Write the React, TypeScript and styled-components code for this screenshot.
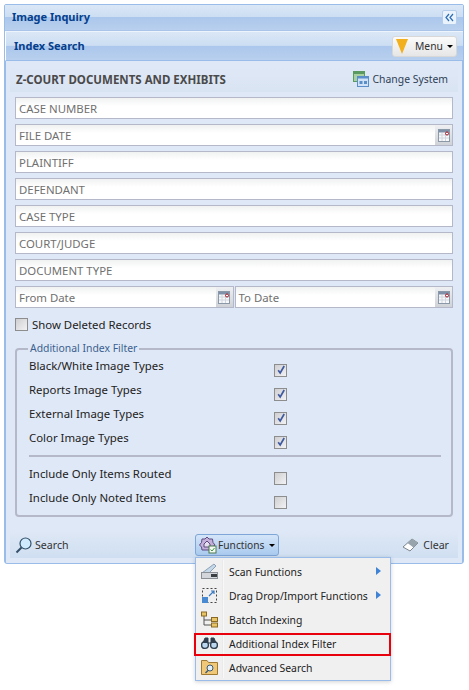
import React from "react";
import styled, { createGlobalStyle } from "styled-components";

const Global = createGlobalStyle`
  html, body { margin: 0; padding: 0; background: #fff; }
  body { font-family: "Noto Sans", "Open Sans", sans-serif; font-size: 11.4px; color: #222; }
  #root { width: 469px; height: 690px; overflow: hidden; }
`;

const Page = styled.div`
  padding: 4px 0 0 4px;
  width: 469px;
  box-sizing: border-box;
`;
const Outer = styled.div`
  position: relative;
  width: 460px;
  height: 560px;
  box-sizing: border-box;
  border: 1px solid #99bce8;
  border-radius: 2px 2px 3px 3px;
  background: #dfe8f6;
  display: flex;
  flex-direction: column;
`;
const Bar = styled.div<{ $h: number }>`
  height: ${(p) => p.$h}px;
  flex: none;
  box-sizing: border-box;
  display: flex;
  align-items: center;
  justify-content: space-between;
  background: linear-gradient(#dae7f6 0%, #cddef3 48%, #abc7ec 50%, #b9d0ee 100%);
`;
const BarTitle = styled.div`
  font-weight: 700;
  font-size: 11px;
  color: #04408c;
  padding-bottom: 2px;
`;
const OuterBar = styled(Bar)`
  padding: 0 6px 0 7px;
  border-bottom: 1px solid #a9c4e8;
`;
const InnerBar = styled(Bar)`
  padding: 0 6px 0 8px;
  border-top: 1px solid #eef4fb;
  border-bottom: 1px solid #99bce8;
  border-left: 1px solid #fff;
`;
const Collapse = styled.div`
  width: 13px;
  height: 13px;
  border: 1px solid #b4cdea;
  border-radius: 2px;
  background: #eaf2fb;
  display: flex;
  align-items: center;
  justify-content: center;
`;
const MenuButton = styled.div`
  width: 65px;
  height: 21px;
  box-sizing: border-box;
  border: 1px solid #d8d8d8;
  border-radius: 3px;
  background: linear-gradient(#fbfbfb, #e6e6e6);
  display: flex;
  align-items: center;
  padding-left: 3px;
  font-size: 10.3px;
  color: #333;
`;
const MenuLabel = styled.span`
  margin-left: 7px;
`;
const Caret = styled.span`
  display: inline-block;
  width: 0;
  height: 0;
  border-left: 3px solid transparent;
  border-right: 3px solid transparent;
  border-top: 3px solid #000;
  margin-left: 4px;
`;
const Body = styled.div`
  flex: 1;
  padding: 5px 4px 0 4px;
  border-left: 1px solid #99bce8;
  border-right: 1px solid #99bce8;
  display: flex;
  flex-direction: column;
`;
const TitleRow = styled.div`
  height: 26px;
  margin: 0 0 5px 0;
  background: linear-gradient(#dfe8f6, #d9e4f3);
  display: flex;
  align-items: center;
  justify-content: space-between;
  padding: 0 10px 0 6px;
`;
const SystemTitle = styled.div`
  font-weight: 700;
  font-size: 11.5px;
  color: #4a4a4a;
`;
const LinkRow = styled.div`
  display: flex;
  align-items: center;
  gap: 4px;
  font-size: 10.4px;
  color: #2f3f55;
`;
const Fields = styled.div`
  padding: 0 5px;
  display: grid;
  grid-auto-rows: 22px;
  gap: 5px;
`;
const InputBox = styled.div`
  min-width: 0;
  box-sizing: border-box;
  border: 1px solid #b5b8c8;
  background: linear-gradient(#f0f1f1 0%, #fff 40%);
  display: flex;
  align-items: center;
  justify-content: space-between;
  padding-left: 3px;
  color: #707070;
`;
const DateRow = styled.div`
  display: grid;
  grid-template-columns: 1fr 1fr;
  gap: 1px;
`;
const Trigger = styled.div`
  width: 17px;
  height: 20px;
  flex: none;
  background: linear-gradient(#eef0f2, #cfd3d8);
  display: flex;
  align-items: center;
  justify-content: center;
`;
const ShowRow = styled.div`
  height: 16px;
  margin: 8px 0 0 5px;
  display: flex;
  align-items: center;
  gap: 4px;
  color: #222;
`;
const Box = styled.div<{ $low?: boolean }>`
  width: 11px;
  height: 11px;
  border: 1px solid #8d8d8d;
  background: linear-gradient(135deg, #cfcfd2, #f2f2f4);
  flex: none;
  display: flex;
  align-items: center;
  justify-content: center;
  margin-top: ${(p) => (p.$low ? "6px" : "0")};
`;
const Fieldset = styled.fieldset`
  margin: 10px 5px 0 5px;
  padding: 0 0 0 12px;
  height: 175px;
  box-sizing: border-box;
  border: 2px solid #b5b8c8;
  border-radius: 4px;
  min-width: 0;
`;
const Legend = styled.legend`
  padding: 0 2px;
  margin-left: -1px;
  font-size: 10.4px;
  color: #3a5f8f;
  line-height: 13px;
`;
const FilterRow = styled.div`
  height: 24px;
  display: grid;
  grid-template-columns: 245px 13px;
  align-items: center;
  color: #222;
`;
const FilterLabel = styled.span`
  padding-bottom: 3px;
`;
const Divider = styled.hr`
  margin: 4px 10px 6px 0;
  border: 0;
  border-top: 2px solid #b5b8c8;
`;
const Footer = styled.div`
  margin-top: 13px;
  height: 28px;
  box-sizing: border-box;
  background: linear-gradient(#dfe8f6, #cfdff1);
  display: grid;
  grid-template-columns: 180px auto 1fr;
  align-items: center;
  padding: 2px 9px 0 5px;
`;
const FootLink = styled.div<{ $end?: boolean }>`
  display: flex;
  align-items: center;
  gap: 3px;
  font-size: 10.6px;
  color: #333;
  justify-content: ${(p) => (p.$end ? "flex-end" : "flex-start")};
`;
const FunctionsBtn = styled.div`
  width: 84px;
  height: 22px;
  box-sizing: border-box;
  border: 1px solid #7ea6d6;
  border-radius: 3px;
  background: linear-gradient(#d4e5f9, #a9caee);
  display: flex;
  align-items: center;
  padding-left: 3px;
  gap: 1px;
  font-size: 10.2px;
  color: #333;
`;
const Menu = styled.div`
  position: absolute;
  left: 190px;
  top: 552px;
  width: 196px;
  height: 124px;
  box-sizing: border-box;
  border: 1px solid #99bce8;
  background: #f0f0f0;
  padding-top: 2px;
  box-shadow: 0 1px 4px rgba(0, 0, 0, 0.18);
  z-index: 3;
  &::before {
    content: "";
    position: absolute;
    left: 26px;
    top: 2px;
    bottom: 2px;
    width: 2px;
    background: linear-gradient(90deg, #e2e3e3, #fff);
  }
`;
const MenuItem = styled.div<{ $active?: boolean }>`
  position: relative;
  height: 24px;
  display: flex;
  align-items: center;
  box-sizing: border-box;
  font-size: 10.4px;
  color: #222;
  &::after {
    content: "";
    display: ${(p) => (p.$active ? "block" : "none")};
    position: absolute;
    left: -2px;
    right: -1px;
    top: 1px;
    bottom: 0;
    border: 2px solid #e8000d;
  }
`;
const MenuIcon = styled.div`
  width: 33px;
  display: flex;
  justify-content: center;
  padding-right: 7px;
  padding-bottom: 2px;
  box-sizing: border-box;
  flex: none;
`;
const Arrow = styled.span`
  position: absolute;
  left: 180px;
  top: 7px;
  width: 0;
  height: 0;
  border-top: 4px solid transparent;
  border-bottom: 4px solid transparent;
  border-left: 5px solid #3f83d6;
`;

const Cal = () => (
  <svg width="12" height="13" viewBox="0 0 12 13">
    <rect x="0.5" y="0.5" width="11" height="12" fill="#f7f8fa" stroke="#8b98a8" />
    <rect x="1" y="1" width="10" height="2.5" fill="#7f91a8" />
    <path d="M1 6h10M1 9h10M4 4v8M7.5 4v8" stroke="#cfd6de" strokeWidth="1" />
    <circle cx="9" cy="4.5" r="1.5" fill="#fff" stroke="#a01020" strokeWidth="1" />
  </svg>
);
const Check = () => (
  <svg width="10" height="10" viewBox="0 0 10 10">
    <path d="M2.2 5.2 L4.2 8 L8.2 1" fill="none" stroke="#3f5aa0" strokeWidth="1.7" />
  </svg>
);
const Field = ({ label, date }: { label: string; date?: boolean }) => (
  <InputBox>
    {label}
    {date && <Trigger><Cal /></Trigger>}
  </InputBox>
);
const Filter = ({ label, on }: { label: string; on?: boolean }) => (
  <FilterRow>
    <FilterLabel>{label}</FilterLabel>
    <Box $low>{on && <Check />}</Box>
  </FilterRow>
);

export default function App() {
  return (
    <Page>
      <Global />
      <Outer>
        <OuterBar $h={26}>
          <BarTitle>Image Inquiry</BarTitle>
          <Collapse>
            <svg width="9" height="9" viewBox="0 0 9 9">
              <path d="M4 1 L1 4.5 L4 8 M8 1 L5 4.5 L8 8" fill="none" stroke="#2a6db5" strokeWidth="1.2" />
            </svg>
          </Collapse>
        </OuterBar>
        <InnerBar $h={30}>
          <BarTitle>Index Search</BarTitle>
          <MenuButton>
            <svg width="12" height="15" viewBox="0 0 12 15">
              <path d="M0 0 H12 L6 15 Z" fill="#f2b01e" />
            </svg>
            <MenuLabel>Menu</MenuLabel>
            <Caret />
          </MenuButton>
        </InnerBar>
        <Body>
          <TitleRow>
            <SystemTitle>Z-COURT DOCUMENTS AND EXHIBITS</SystemTitle>
            <LinkRow>
              <svg width="16" height="16" viewBox="0 0 16 16">
                <rect x="0.5" y="0.5" width="11" height="10" fill="#a8d0a0" stroke="#5a9a60" />
                <rect x="0.5" y="0.5" width="11" height="2.5" fill="#5a9a60" />
                <rect x="4.5" y="5.5" width="11" height="10" fill="#cfe2f7" stroke="#5b8fc9" />
                <rect x="4.5" y="5.5" width="11" height="2" fill="#5b8fc9" />
                <rect x="6.5" y="10" width="3" height="3" fill="#5b8fc9" />
                <rect x="11" y="10" width="3" height="3" fill="#5b8fc9" />
              </svg>
              Change System
            </LinkRow>
          </TitleRow>
          <Fields>
            <Field label="CASE NUMBER" />
            <Field label="FILE DATE" date />
            <Field label="PLAINTIFF" />
            <Field label="DEFENDANT" />
            <Field label="CASE TYPE" />
            <Field label="COURT/JUDGE" />
            <Field label="DOCUMENT TYPE" />
            <DateRow>
              <Field label="From Date" date />
              <Field label="To Date" date />
            </DateRow>
          </Fields>
          <ShowRow>
            <Box />
            Show Deleted Records
          </ShowRow>
          <Fieldset>
            <Legend>Additional Index Filter</Legend>
            <Filter label="Black/White Image Types" on />
            <Filter label="Reports Image Types" on />
            <Filter label="External Image Types" on />
            <Filter label="Color Image Types" on />
            <Divider />
            <Filter label="Include Only Items Routed" />
            <Filter label="Include Only Noted Items" />
          </Fieldset>
          <Footer>
            <FootLink>
              <svg width="17" height="17" viewBox="0 0 17 17">
                <circle cx="10.5" cy="6.5" r="5.5" fill="#cfeafc" stroke="#33506a" strokeWidth="1.2" />
                <path d="M6.5 10.5 L1.5 15.5" stroke="#33506a" strokeWidth="2" />
              </svg>
              Search
            </FootLink>
            <FunctionsBtn>
              <svg width="18" height="18" viewBox="0 0 18 18">
                <path d="M8 1 L10 3 L13.5 3 L14 6.5 L16 9 L13.5 11 L13 14 L3 14 L2.5 11 L0.5 9 L2.5 6.5 L3 3 L6 3 Z" fill="#c2b0d8" stroke="#5f4a80" />
                <path d="M5 8 L8 5 L11 8 V11 H5 Z" fill="#e6dff0" stroke="#5f4a80" />
                <rect x="10" y="10" width="7" height="7" fill="#f4f8f2" stroke="#4a7a50" />
                <path d="M11.5 13.5 L13 15 L15.5 12" fill="none" stroke="#3a9a40" />
              </svg>
              Functions
              <Caret />
            </FunctionsBtn>
            <FootLink $end>
              <svg width="18" height="16" viewBox="0 0 18 16">
                <path d="M1 10 L10 2 L16 6 L8 14 Z" fill="#fff" stroke="#7d858c" />
                <path d="M5.5 6 L10 2 L16 6 L11.5 10.5 Z" fill="#98a4ad" />
              </svg>
              Clear
            </FootLink>
          </Footer>
        </Body>
        <Menu>
          <MenuItem>
            <MenuIcon>
              <svg width="17" height="16" viewBox="0 0 17 16">
                <path d="M1 10 L13 1 L15 3 L8 10 Z" fill="#c4d8ea" stroke="#8ea2b6" />
                <rect x="0.5" y="9.5" width="16" height="6" fill="#d3d6da" stroke="#8a9096" />
                <rect x="10" y="11" width="6" height="3" fill="#3a3f44" />
              </svg>
            </MenuIcon>
            Scan Functions
            <Arrow />
          </MenuItem>
          <MenuItem>
            <MenuIcon>
              <svg width="17" height="17" viewBox="0 0 17 17">
                <rect x="1.5" y="1.5" width="14" height="14" fill="none" stroke="#444" strokeDasharray="2 2" />
                <rect x="1" y="10" width="6" height="6" fill="#4a8ad0" />
                <path d="M8 9 L13 4 M10 4 H13 V7" fill="none" stroke="#3a7ac0" strokeWidth="1.2" />
              </svg>
            </MenuIcon>
            Drag Drop/Import Functions
            <Arrow />
          </MenuItem>
          <MenuItem>
            <MenuIcon>
              <svg width="17" height="17" viewBox="0 0 17 17">
                <path d="M3 5 V14 H10 M3 9 H10" fill="none" stroke="#555" />
                <rect x="0.5" y="1" width="5" height="4" fill="#e8c468" stroke="#8a6a20" />
                <rect x="10.5" y="6.5" width="6" height="4" fill="#e8c468" stroke="#8a6a20" />
                <rect x="10.5" y="12" width="6" height="4" fill="#e8c468" stroke="#8a6a20" />
              </svg>
            </MenuIcon>
            Batch Indexing
          </MenuItem>
          <MenuItem $active>
            <MenuIcon>
              <svg width="17" height="14" viewBox="0 0 17 14">
                <circle cx="4" cy="9" r="3.4" fill="#bcd8f0" stroke="#2f3f50" strokeWidth="1.4" />
                <circle cx="13" cy="9" r="3.4" fill="#bcd8f0" stroke="#2f3f50" strokeWidth="1.4" />
                <path d="M2 7 L4 2 H7 V7 H10 V2 H13 L15 7" fill="#2f3f50" stroke="#2f3f50" />
              </svg>
            </MenuIcon>
            Additional Index Filter
          </MenuItem>
          <MenuItem>
            <MenuIcon>
              <svg width="17" height="15" viewBox="0 0 17 15">
                <path d="M0.5 14.5 V0.5 H6 L7.5 2.5 H16.5 V14.5 Z" fill="#f0c878" stroke="#a07a30" />
                <circle cx="9" cy="8" r="3" fill="#dff0fb" stroke="#3a5a78" />
                <path d="M7 10.5 L4.5 13" stroke="#3a5a78" strokeWidth="1.5" />
              </svg>
            </MenuIcon>
            Advanced Search
          </MenuItem>
        </Menu>
      </Outer>
    </Page>
  );
}
